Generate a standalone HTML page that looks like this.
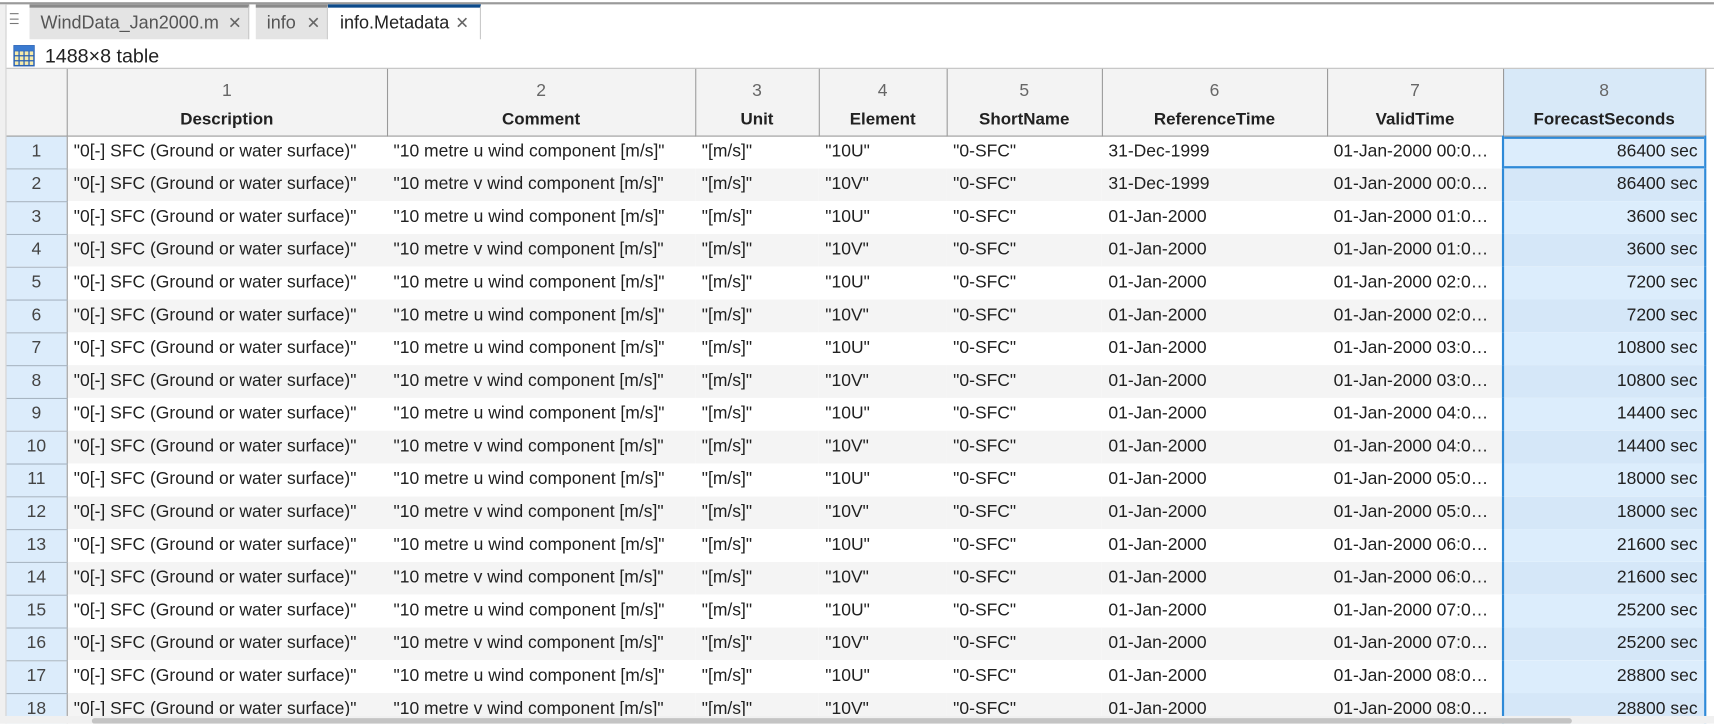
<!DOCTYPE html>
<html><head><style>
*{margin:0;padding:0;box-sizing:border-box}
body{width:1714px;height:723px;overflow:hidden;background:#fff;font-family:"Liberation Sans",sans-serif;color:#212121;position:relative}
#w{position:absolute;left:0;top:0;width:1568px;height:662px;overflow:hidden;transform:scale(1.0931);transform-origin:0 0}
.topline{position:absolute;left:0;top:0;width:1568px;height:4px;background:#fff;border-bottom:2px solid #9a9a9a}
.left{position:absolute;left:0;top:4px;width:6px;height:660px;background:#f0f0f0;border-right:1px solid #d0d0d0}
.tab{position:absolute;top:4px;height:32px;background:#e4e4e4;border-top:3px solid #8a8a8a;font-size:16.5px;color:#555;line-height:29px;padding-left:10px;border-right:1px solid #c8c8c8;white-space:nowrap}
.tab .x{position:absolute;right:6px;top:0;color:#666;font-size:15px}
.info{position:absolute;left:6px;top:36px;width:1562px;height:27px;background:#fff;border-bottom:1px solid #c0c0c0;font-size:18px;line-height:30px;padding-left:35px}
table{position:absolute;left:6px;top:63px;border-collapse:collapse;table-layout:fixed;font-size:16px;width:1554px}
td,th{height:30px;white-space:nowrap;overflow:hidden;padding:0 6px;border:none}
th{height:61px;background:#f3f3f3;border-right:1px solid #999;border-bottom:1px solid #999;font-weight:bold;font-size:15.5px;line-height:25px;vertical-align:top;padding-top:8px}
th span{display:block;font-weight:normal;color:#666;font-size:16px;margin-bottom:1px}
td.rn{background:#dcecfb;text-align:center;color:#444;border-bottom:1px solid #a6b4c2;border-right:1px solid #999}
tr.e td{background:#f4f4f4}
tr.e td.rn{background:#dcecfb}
td.s{text-align:right;background:#dcedfc!important;border-left:2px solid #2e8ad8;border-right:2px solid #2e8ad8}
tr.e td.s{background:#d5e7f8!important}
th.s{background:#d8e9f8;border-right:1px solid #999}
td.first{box-shadow:inset 0 -2px 0 #2e8ad8,inset 0 2px 0 #2e8ad8}
.bottom{position:absolute;left:0;top:655px;width:1568px;height:8px;background:#f0f0f0}
.sb{position:absolute;left:84px;top:657px;width:1354px;height:5px;background:#c4c4c4;border-radius:3px}
</style></head><body><div id="w">
<div class="topline"></div>
<div class="left"></div>
<div style="position:absolute;left:9px;top:12px;width:8px;height:10px;border-top:1px solid #777;border-bottom:1px solid #777"><div style="margin-top:4px;border-top:1px solid #777"></div></div>
<div class="tab" style="left:27px;width:201px">WindData_Jan2000.m<span class="x">✕</span></div>
<div class="tab" style="left:234px;width:66px">info<span class="x">✕</span></div>
<div class="tab" style="left:300px;width:140px;background:#fff;border-top:3px solid #0c4a8a;color:#222;padding-left:11px">info.Metadata<span class="x" style="right:10px">✕</span></div>
<div class="info">1488×8 table</div>
<svg style="position:absolute;left:12px;top:41px" width="20" height="20" viewBox="0 0 22 22"><rect x="1" y="1" width="20" height="20" fill="#f7ebaa" stroke="#2a62b4" stroke-width="1.5"/><path d="M1 6H21M1 11H21M1 16H21M6 1V21M11 1V21M16 1V21" stroke="#2a62b4" stroke-width="1.3"/><rect x="1" y="1" width="20" height="5" fill="#3a7ad0"/></svg>
<table>
<colgroup><col style="width:55px"><col style="width:293px"><col style="width:282px"><col style="width:113px"><col style="width:117px"><col style="width:142px"><col style="width:206px"><col style="width:161px"><col style="width:185px"></colgroup>
<tr><th class="rn"></th><th><span>1</span>Description</th><th><span>2</span>Comment</th><th><span>3</span>Unit</th><th><span>4</span>Element</th><th><span>5</span>ShortName</th><th><span>6</span>ReferenceTime</th><th><span>7</span>ValidTime</th><th class="s"><span>8</span>ForecastSeconds</th></tr>
<tr><td class="rn">1</td><td>"0[-] SFC (Ground or water surface)"</td><td>"10 metre u wind component [m/s]"</td><td>"[m/s]"</td><td>"10U"</td><td>"0-SFC"</td><td>31-Dec-1999</td><td>01-Jan-2000 00:0…</td><td class="s first">86400 sec</td></tr>
<tr class="e"><td class="rn">2</td><td>"0[-] SFC (Ground or water surface)"</td><td>"10 metre v wind component [m/s]"</td><td>"[m/s]"</td><td>"10V"</td><td>"0-SFC"</td><td>31-Dec-1999</td><td>01-Jan-2000 00:0…</td><td class="s">86400 sec</td></tr>
<tr><td class="rn">3</td><td>"0[-] SFC (Ground or water surface)"</td><td>"10 metre u wind component [m/s]"</td><td>"[m/s]"</td><td>"10U"</td><td>"0-SFC"</td><td>01-Jan-2000</td><td>01-Jan-2000 01:0…</td><td class="s">3600 sec</td></tr>
<tr class="e"><td class="rn">4</td><td>"0[-] SFC (Ground or water surface)"</td><td>"10 metre v wind component [m/s]"</td><td>"[m/s]"</td><td>"10V"</td><td>"0-SFC"</td><td>01-Jan-2000</td><td>01-Jan-2000 01:0…</td><td class="s">3600 sec</td></tr>
<tr><td class="rn">5</td><td>"0[-] SFC (Ground or water surface)"</td><td>"10 metre u wind component [m/s]"</td><td>"[m/s]"</td><td>"10U"</td><td>"0-SFC"</td><td>01-Jan-2000</td><td>01-Jan-2000 02:0…</td><td class="s">7200 sec</td></tr>
<tr class="e"><td class="rn">6</td><td>"0[-] SFC (Ground or water surface)"</td><td>"10 metre u wind component [m/s]"</td><td>"[m/s]"</td><td>"10V"</td><td>"0-SFC"</td><td>01-Jan-2000</td><td>01-Jan-2000 02:0…</td><td class="s">7200 sec</td></tr>
<tr><td class="rn">7</td><td>"0[-] SFC (Ground or water surface)"</td><td>"10 metre u wind component [m/s]"</td><td>"[m/s]"</td><td>"10U"</td><td>"0-SFC"</td><td>01-Jan-2000</td><td>01-Jan-2000 03:0…</td><td class="s">10800 sec</td></tr>
<tr class="e"><td class="rn">8</td><td>"0[-] SFC (Ground or water surface)"</td><td>"10 metre v wind component [m/s]"</td><td>"[m/s]"</td><td>"10V"</td><td>"0-SFC"</td><td>01-Jan-2000</td><td>01-Jan-2000 03:0…</td><td class="s">10800 sec</td></tr>
<tr><td class="rn">9</td><td>"0[-] SFC (Ground or water surface)"</td><td>"10 metre u wind component [m/s]"</td><td>"[m/s]"</td><td>"10U"</td><td>"0-SFC"</td><td>01-Jan-2000</td><td>01-Jan-2000 04:0…</td><td class="s">14400 sec</td></tr>
<tr class="e"><td class="rn">10</td><td>"0[-] SFC (Ground or water surface)"</td><td>"10 metre v wind component [m/s]"</td><td>"[m/s]"</td><td>"10V"</td><td>"0-SFC"</td><td>01-Jan-2000</td><td>01-Jan-2000 04:0…</td><td class="s">14400 sec</td></tr>
<tr><td class="rn">11</td><td>"0[-] SFC (Ground or water surface)"</td><td>"10 metre u wind component [m/s]"</td><td>"[m/s]"</td><td>"10U"</td><td>"0-SFC"</td><td>01-Jan-2000</td><td>01-Jan-2000 05:0…</td><td class="s">18000 sec</td></tr>
<tr class="e"><td class="rn">12</td><td>"0[-] SFC (Ground or water surface)"</td><td>"10 metre v wind component [m/s]"</td><td>"[m/s]"</td><td>"10V"</td><td>"0-SFC"</td><td>01-Jan-2000</td><td>01-Jan-2000 05:0…</td><td class="s">18000 sec</td></tr>
<tr><td class="rn">13</td><td>"0[-] SFC (Ground or water surface)"</td><td>"10 metre u wind component [m/s]"</td><td>"[m/s]"</td><td>"10U"</td><td>"0-SFC"</td><td>01-Jan-2000</td><td>01-Jan-2000 06:0…</td><td class="s">21600 sec</td></tr>
<tr class="e"><td class="rn">14</td><td>"0[-] SFC (Ground or water surface)"</td><td>"10 metre v wind component [m/s]"</td><td>"[m/s]"</td><td>"10V"</td><td>"0-SFC"</td><td>01-Jan-2000</td><td>01-Jan-2000 06:0…</td><td class="s">21600 sec</td></tr>
<tr><td class="rn">15</td><td>"0[-] SFC (Ground or water surface)"</td><td>"10 metre u wind component [m/s]"</td><td>"[m/s]"</td><td>"10U"</td><td>"0-SFC"</td><td>01-Jan-2000</td><td>01-Jan-2000 07:0…</td><td class="s">25200 sec</td></tr>
<tr class="e"><td class="rn">16</td><td>"0[-] SFC (Ground or water surface)"</td><td>"10 metre v wind component [m/s]"</td><td>"[m/s]"</td><td>"10V"</td><td>"0-SFC"</td><td>01-Jan-2000</td><td>01-Jan-2000 07:0…</td><td class="s">25200 sec</td></tr>
<tr><td class="rn">17</td><td>"0[-] SFC (Ground or water surface)"</td><td>"10 metre u wind component [m/s]"</td><td>"[m/s]"</td><td>"10U"</td><td>"0-SFC"</td><td>01-Jan-2000</td><td>01-Jan-2000 08:0…</td><td class="s">28800 sec</td></tr>
<tr class="e"><td class="rn">18</td><td>"0[-] SFC (Ground or water surface)"</td><td>"10 metre v wind component [m/s]"</td><td>"[m/s]"</td><td>"10V"</td><td>"0-SFC"</td><td>01-Jan-2000</td><td>01-Jan-2000 08:0…</td><td class="s">28800 sec</td></tr>
</table>
<div class="bottom"></div>
<div class="sb"></div>
</div></body></html>
